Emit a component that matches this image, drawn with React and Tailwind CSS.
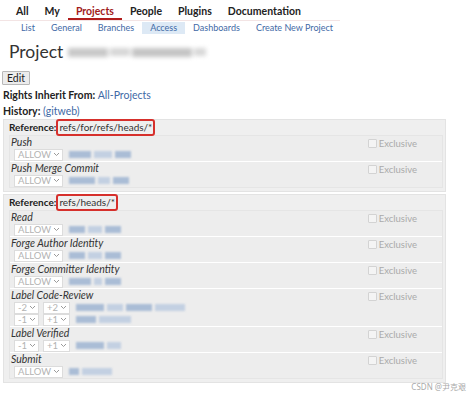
import React from "react";

const topNav = ["All", "My", "Projects", "People", "Plugins", "Documentation"];
const subNav = ["List", "General", "Branches", "Access", "Dashboards", "Create New Project"];

// blurred group names, widths of each smudge
const Smudge = ({ parts }) => (
  <span className="flex items-center gap-[3px] ml-[2px] blur-[1px]">
    {parts.map((w, i) => (
      <span
        key={i}
        className={i % 2 ? "h-[7px] bg-[#c3d0e2]" : "h-[7px] bg-[#aabdd6]"}
        style={{ width: w }}
      />
    ))}
  </span>
);

const Select = ({ value }) => (
  <span className="inline-flex items-center h-[12px] border border-[#dcdcdc] bg-white text-[#b3b3b3] text-[9.5px] pl-[3px] pr-[2px] mr-[4px] leading-none">
    {value}
    <svg width="7" height="5" viewBox="0 0 7 5" className="ml-[2px]">
      <path d="M1 1l2.5 2.5L6 1" stroke="#9a9a9a" strokeWidth="1" fill="none" />
    </svg>
  </span>
);

const Permission = ({ name, lines, first }) => (
  <div className={first ? "flex justify-between pl-[1px] pr-[25px]" : "flex justify-between pl-[1px] pr-[25px] border-t border-white"}>
    <div>
      <div className="italic text-[#333] text-[10.5px] h-[13px] leading-[13px]">{name}</div>
      {lines.map((l, i) => (
        <div key={i} className="flex items-center h-[12px] pl-[3px]">
          {l.sel.map((s, j) => (
            <Select key={j} value={s} />
          ))}
          <Smudge parts={l.smudge} />
        </div>
      ))}
    </div>
    <div className="flex items-start pt-[2px] text-[#aaa] text-[9.5px]">
      <span className="w-[9px] h-[9px] border border-[#d3d3d3] bg-[#f4f4f4] rounded-[1px] mr-[2px] mt-[1px]" />
      <span className="leading-[12px]">Exclusive</span>
    </div>
  </div>
);

const Section = ({ refName, perms }) => (
  <div className="ml-[3px] w-[443px] bg-[#efefef] border border-[#e3e3e3] pl-[5px] pr-[2px] pb-[3px] mb-[2px]">
    <div className="flex items-center h-[15px] pt-[1px]">
      <span className="font-bold text-[#222] text-[10px]">Reference:</span>
      <span className="border-2 border-[#d6302c] rounded-[3px] px-[1px] h-[17px] leading-[13px] text-[10px] text-[#333]">
        {refName}
      </span>
    </div>
    <div className="border border-[#e5e5e5] bg-[#ededed]">
      {perms.map((p, i) => (
        <Permission key={p.name} {...p} first={i === 0} />
      ))}
    </div>
  </div>
);

const allow = (smudge) => ({ sel: ["ALLOW"], smudge });

export default function App() {
  return (
    <div className="w-[474px] h-[396px] bg-white overflow-hidden relative font-['Lato',sans-serif] text-[10.5px] text-[#222]">
      {/* top nav */}
      <div className="flex pl-[8px] pt-[5px] border-b border-[#f3e4e4] w-[340px]">
        {topNav.map((t) => (
          <span
            key={t}
            className={
              t === "Projects"
                ? "px-[8px] text-[10.5px] font-bold text-[#a11c1c] border-b-2 border-[#b01c1c] leading-[13px]"
                : "px-[8px] text-[10.5px] font-bold text-[#222] border-b-2 border-transparent leading-[13px]"
            }
          >
            {t}
          </span>
        ))}
      </div>
      {/* sub nav */}
      <div className="flex pl-[13px] mt-[1px]">
        {subNav.map((t) => (
          <span
            key={t}
            className={
              t === "Access"
                ? "px-[8px] text-[9px] leading-[12px] text-[#3f6aa6] bg-[#dde9f5]"
                : "px-[8px] text-[9px] leading-[12px] text-[#3f6aa6]"
            }
          >
            {t}
          </span>
        ))}
      </div>

      <div className="flex items-center pl-[9px] mt-[7px] h-[22px]">
        <span className="text-[17.5px] text-[#333] leading-none">Project</span>
        <span className="flex gap-[2px] ml-[5px] blur-[2px]">
          <span className="w-[40px] h-[9px] bg-[#c8c8c8]" />
          <span className="w-[20px] h-[8px] bg-[#d6d6d6]" />
          <span className="w-[60px] h-[9px] bg-[#c4c4c4]" />
          <span className="w-[12px] h-[8px] bg-[#d8d8d8]" />
        </span>
      </div>

      <div className="pl-[2px] mt-[8px]">
        <button className="h-[14px] px-[4px] border border-[#b8b8b8] bg-[#ececec] rounded-[1px] text-[10.5px] leading-none text-[#222]">
          Edit
        </button>
      </div>

      <div className="pl-[3px] mt-[1px] leading-[15px]">
        <span className="font-bold">Rights Inherit From: </span>
        <span className="text-[#3f6aa6]">All-Projects</span>
      </div>
      <div className="pl-[3px] leading-[16px]">
        <span className="font-bold">History: </span>
        <span className="text-[#3f6aa6]">(gitweb)</span>
      </div>

      <div>
        <Section
          refName="refs/for/refs/heads/*"
          perms={[
            { name: "Push", lines: [allow([22, 18, 16])] },
            { name: "Push Merge Commit", lines: [allow([26, 12, 16])] },
          ]}
        />
        <Section
          refName="refs/heads/*"
          perms={[
            { name: "Read", lines: [allow([16, 14, 16])] },
            { name: "Forge Author Identity", lines: [allow([16, 14, 16])] },
            { name: "Forge Committer Identity", lines: [allow([22, 8, 16])] },
            {
              name: "Label Code-Review",
              lines: [
                { sel: ["-2", "+2"], smudge: [28, 16, 26, 30] },
                { sel: ["-1", "+1"], smudge: [20, 32] },
              ],
            },
            { name: "Label Verified", lines: [{ sel: ["-1", "+1"], smudge: [28, 14] }] },
            { name: "Submit", lines: [allow([10, 30])] },
          ]}
        />
      </div>

      <div className="absolute right-[8px] bottom-[3px] text-[8px] text-[#aaa] font-['Noto_Sans','Noto_Sans_CJK_SC',sans-serif]">
        CSDN @尹克艰
      </div>
    </div>
  );
}
